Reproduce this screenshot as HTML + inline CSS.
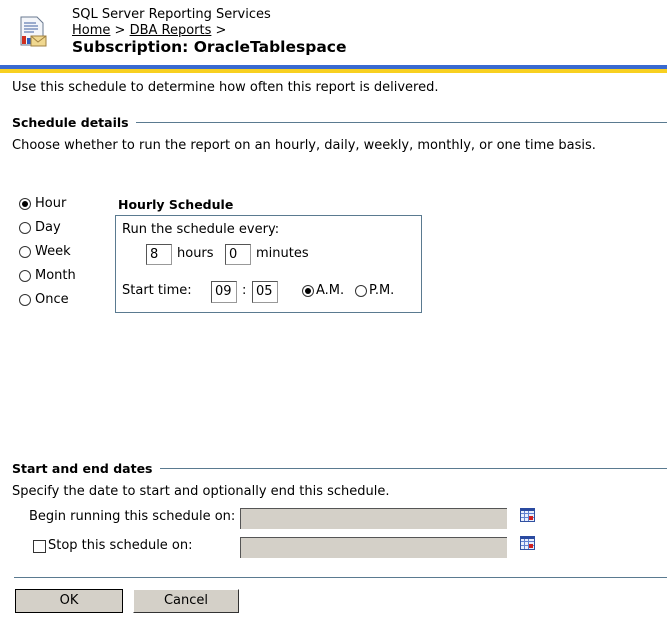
<!DOCTYPE html>
<html><head><style>
body{margin:0;width:667px;height:630px;background:#fff;font-family:"DejaVu Sans","Liberation Sans",sans-serif;font-size:13px;color:#000;position:relative;overflow:hidden}
.a{position:absolute;white-space:nowrap}
.b{font-weight:bold;font-size:12.5px}
.r{position:absolute;width:12px;height:12px;border:1px solid #333;border-radius:50%;box-sizing:border-box}
.r.on::after{content:"";position:absolute;left:2px;top:2px;width:6px;height:6px;border-radius:50%;background:#000}
.tb{position:absolute;border:1px solid #999;border-top-color:#555;border-left-color:#555;box-sizing:border-box;padding:2px 3px;font-size:13px;line-height:15px;background:#fff}
.hl{position:absolute;height:1px;background:#5a7a90}
.btn{position:absolute;background:#d4d0c8;border:1px solid;border-color:#fff #333 #333 #fff;box-sizing:border-box;text-align:center;line-height:21px;font-size:13px}
.cal{position:absolute;width:15px;height:14px;border:1px solid #3050a0;border-top:3px solid #2a4aa0;box-sizing:border-box;background:#e8eefc;background-image:linear-gradient(90deg,transparent 3px,#6080d0 3px 4px,transparent 4px 7px,#6080d0 7px 8px,transparent 8px),linear-gradient(0deg,transparent 3px,#6080d0 3px 4px,transparent 4px 7px,#6080d0 7px 8px,transparent 8px)}
.cal::after{content:"";position:absolute;right:1px;bottom:1px;width:4px;height:4px;background:#d02020}
</style></head><body>
<svg class="a" style="left:18px;top:16px" width="30" height="32" viewBox="0 0 30 32">
<path d="M3 1h16l6 6v22H3z" fill="#f4f6fa" stroke="#6a7a90"/>
<path d="M6 7h12M6 10h14M6 13h14M6 16h10" stroke="#4060a0"/>
<rect x="4" y="20" width="4" height="8" fill="#d03020"/><rect x="9" y="22" width="4" height="6" fill="#3060c0"/>
<path d="M13 20h15v10H13z" fill="#f0d890" stroke="#a08040"/><path d="M13 20l7 6 8-6" fill="none" stroke="#a08040"/>
</svg>
<div class="a" style="left:72px;top:7px">SQL Server Reporting Services</div>
<div class="a" style="left:72px;top:23px"><u>Home</u> &gt; <u>DBA Reports</u> &gt;</div>
<div class="a" style="left:72px;top:38px;font-size:15.5px;font-weight:bold">Subscription: OracleTablespace</div>
<div class="a" style="left:0;top:65px;width:667px;height:4px;background:#3a6ad0"></div>
<div class="a" style="left:0;top:69px;width:667px;height:4px;background:#f8d020"></div>
<div class="a" style="left:12px;top:80px">Use this schedule to determine how often this report is delivered.</div>
<div class="a b" style="left:12px;top:115px">Schedule details</div>
<div class="hl" style="left:136px;top:122px;width:531px"></div>
<div class="a" style="left:12px;top:138px">Choose whether to run the report on an hourly, daily, weekly, monthly, or one time basis.</div>
<div class="r on" style="left:19px;top:198px"></div><div class="a" style="left:35px;top:196px">Hour</div>
<div class="r" style="left:19px;top:222px"></div><div class="a" style="left:35px;top:220px">Day</div>
<div class="r" style="left:19px;top:246px"></div><div class="a" style="left:35px;top:244px">Week</div>
<div class="r" style="left:19px;top:270px"></div><div class="a" style="left:35px;top:268px">Month</div>
<div class="r" style="left:19px;top:294px"></div><div class="a" style="left:35px;top:292px">Once</div>
<div class="a b" style="left:118px;top:197px">Hourly Schedule</div>
<div class="a" style="left:115px;top:215px;width:307px;height:98px;border:1px solid #5a7a90;box-sizing:border-box"></div>
<div class="a" style="left:122px;top:222px">Run the schedule every:</div>
<div class="tb" style="left:146px;top:244px;width:26px;height:21px">8</div>
<div class="a" style="left:177px;top:246px">hours</div>
<div class="tb" style="left:225px;top:244px;width:26px;height:21px">0</div>
<div class="a" style="left:256px;top:246px">minutes</div>
<div class="a" style="left:122px;top:283px">Start time:</div>
<div class="tb" style="left:211px;top:281px;width:26px;height:22px">09</div>
<div class="a" style="left:242px;top:283px">:</div>
<div class="tb" style="left:252px;top:281px;width:26px;height:22px">05</div>
<div class="r on" style="left:302px;top:285px"></div><div class="a" style="left:316px;top:283px">A.M.</div>
<div class="r" style="left:355px;top:285px"></div><div class="a" style="left:369px;top:283px">P.M.</div>
<div class="a b" style="left:12px;top:461px">Start and end dates</div>
<div class="hl" style="left:160px;top:468px;width:507px"></div>
<div class="a" style="left:12px;top:484px">Specify the date to start and optionally end this schedule.</div>
<div class="a" style="left:29px;top:509px">Begin running this schedule on:</div>
<div class="a" style="left:240px;top:508px;width:267px;height:21px;background:#d4d0c8;border-top:1px solid #555;border-left:1px solid #555;box-sizing:border-box"></div>
<div class="cal" style="left:520px;top:508px"></div>
<div class="a" style="left:33px;top:540px;width:13px;height:13px;border:1px solid #333;box-sizing:border-box"></div>
<div class="a" style="left:48px;top:538px">Stop this schedule on:</div>
<div class="a" style="left:240px;top:537px;width:267px;height:21px;background:#d4d0c8;border-top:1px solid #555;border-left:1px solid #555;box-sizing:border-box"></div>
<div class="cal" style="left:520px;top:536px"></div>
<div class="hl" style="left:14px;top:577px;width:653px"></div>
<div class="btn" style="left:15px;top:589px;width:108px;height:24px;border-color:#000">OK</div>
<div class="btn" style="left:133px;top:589px;width:106px;height:24px">Cancel</div>
</body></html>
